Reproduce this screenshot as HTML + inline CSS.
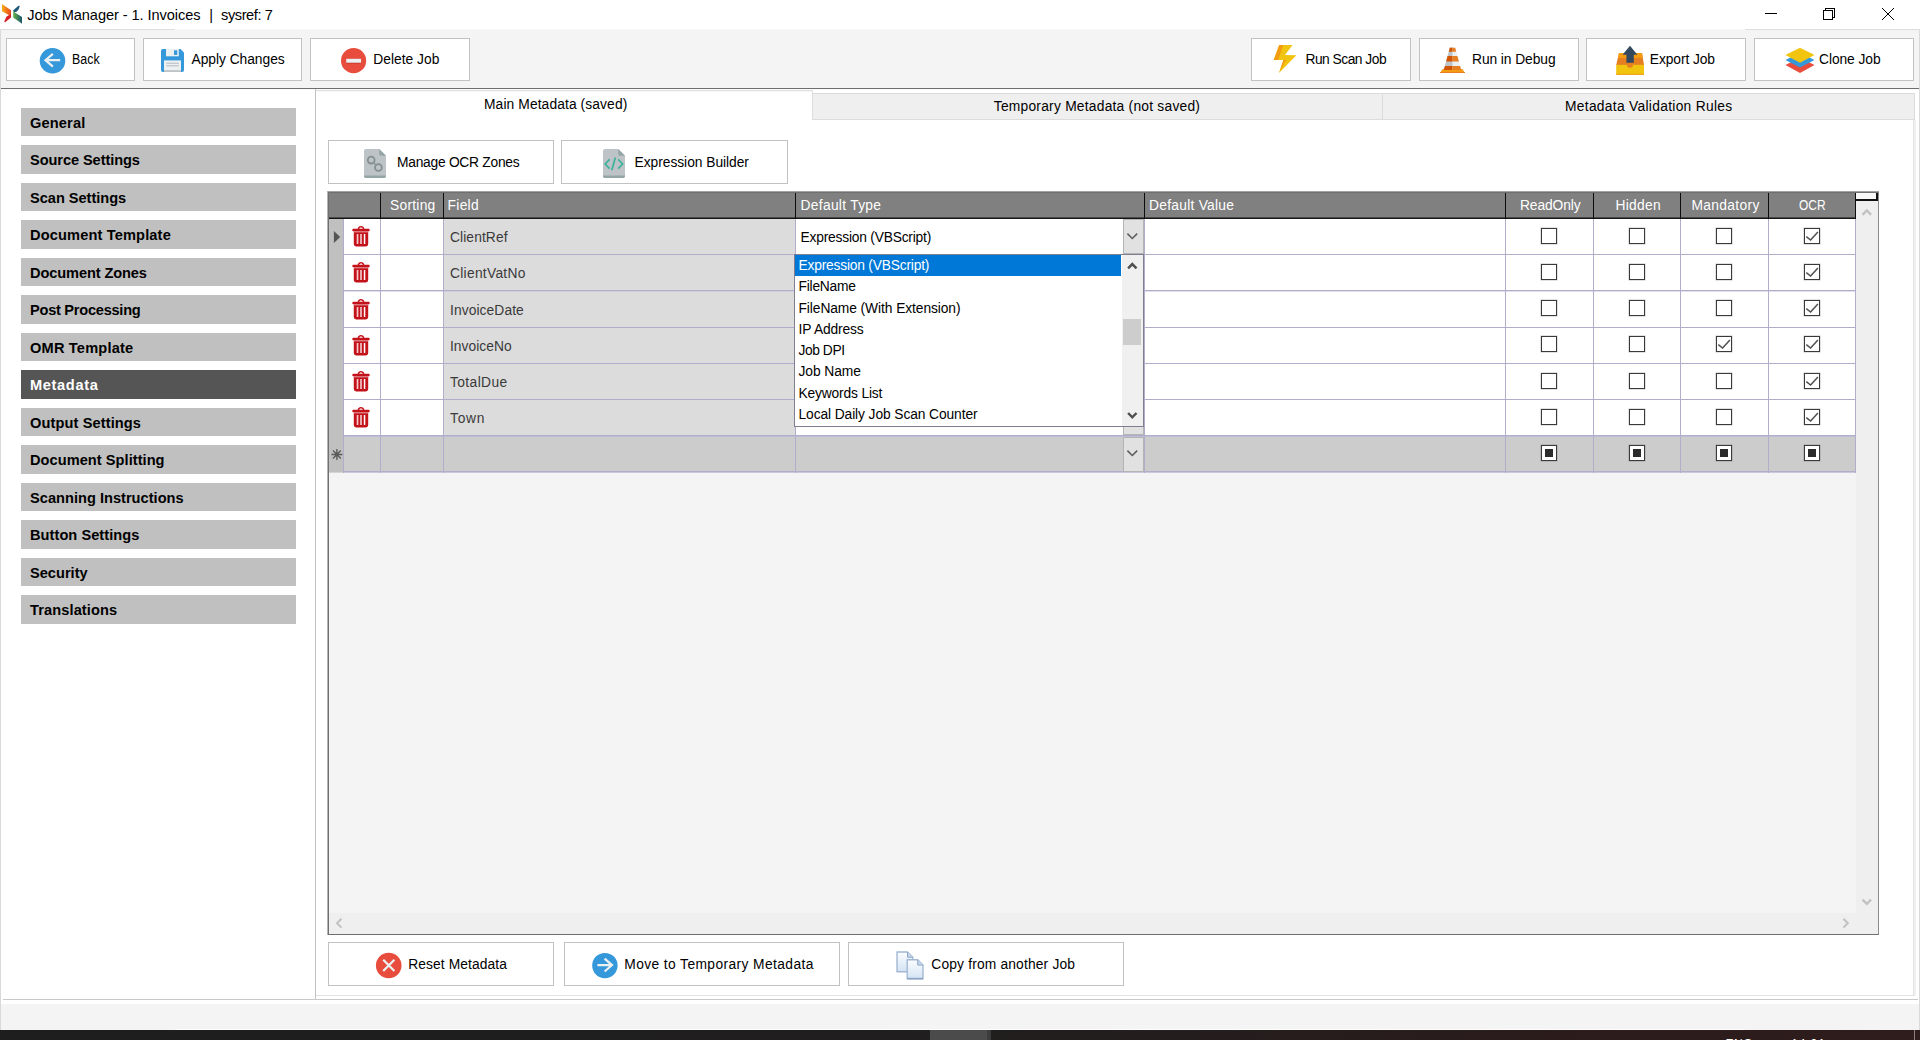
<!DOCTYPE html>
<html lang="en"><head><meta charset="utf-8"><title>Jobs Manager - 1. Invoices | sysref: 7</title>
<style>
html,body{margin:0;padding:0}
body{width:1920px;height:1040px;position:relative;overflow:hidden;background:#fff;font-family:"Liberation Sans",sans-serif;color:#000}
body div,body span.t,body svg{position:absolute}
span.t{white-space:pre;line-height:20px;height:20px}
.btn{box-sizing:border-box;border:1px solid #c2c2c2;background:#fff}
.sb{background:#c0c0c0}
.sb.sel{background:#555}
.hl{background:#b4b4cc}
.cb{box-sizing:border-box;border:1px solid #3a3a3a;box-shadow:0 0 0 0.5px rgba(80,80,80,.35);background:#fff;width:16px;height:16px}

</style></head><body>
<svg style="left:0;top:0" width="26" height="28" viewBox="0 0 26 28">
<defs>
<linearGradient id="gO" x1="0" y1="0" x2="1" y2="0"><stop offset="0" stop-color="#fbab18"/><stop offset="1" stop-color="#e6461c"/></linearGradient>
<linearGradient id="gG" x1="0" y1="0" x2="1" y2="0"><stop offset="0" stop-color="#63b246"/><stop offset="1" stop-color="#1d566d"/></linearGradient>
</defs>
<polygon points="2,4 11,10.3 11,16.2 2,11.3" fill="url(#gO)"/>
<polygon points="11,14 11,17.6 5.2,22.2 4.2,21.4 6.6,16.4" fill="#d81f26"/>
<polygon points="13.3,10.2 18.2,6.1 19.8,5.8 18.8,8.9 16.6,11.7 13.6,12.4" fill="#1f5878"/>
<polygon points="13.2,11.6 22,17 22,23.8 13.2,17.4" fill="url(#gG)"/>
</svg>
<span class="t " style="left:27.20px;top:4.94px;font-size:14.6px;letter-spacing:-0.076px;color:#000;">Jobs Manager - 1. Invoices</span>
<span class="t " style="left:209.30px;top:4.94px;font-size:14.6px;letter-spacing:0.000px;color:#000;">|</span>
<span class="t " style="left:221.00px;top:4.94px;font-size:14.6px;letter-spacing:-0.421px;color:#000;">sysref: 7</span>
<svg style="left:1750px;top:0" width="170" height="29" viewBox="1750 0 170 29" fill="none" stroke="#000" stroke-width="1">
<path d="M1765 13.5H1777"/>
<path d="M1823.5 10.5h9v9h-9zM1825.5 10.5v-2h9v9h-2" shape-rendering="crispEdges"/>
<path d="M1882 8l12 12M1894 8l-12 12" stroke-width="1"/>
</svg>
<div id="client" style="left:0;top:0;width:1920px;height:1030px;overflow:hidden"><div id="cl" style="left:0;top:0;width:1920px;height:1040px">
<div class="" style="left:0px;top:29px;width:1920px;height:1px;background:#f9f9f9"></div>
<div class="" style="left:0px;top:29px;width:175px;height:1px;background:#dedede"></div>
<div class="" style="left:1745px;top:29px;width:175px;height:1px;background:#dedede"></div>
<div class="" style="left:0px;top:30px;width:1920px;height:58px;background:#f4f4f4"></div>
<div class="" style="left:0px;top:88px;width:1920px;height:1px;background:#6e6e6e"></div>
<div class="" style="left:0px;top:89px;width:1920px;height:1px;background:#fbfbfb"></div>
<div class="btn" style="left:6px;top:38px;width:129px;height:43px;"></div>
<div class="btn" style="left:143px;top:38px;width:159px;height:43px;"></div>
<div class="btn" style="left:310px;top:38px;width:160px;height:43px;"></div>
<div class="btn" style="left:1251px;top:38px;width:160px;height:43px;"></div>
<div class="btn" style="left:1419px;top:38px;width:160px;height:43px;"></div>
<div class="btn" style="left:1586px;top:38px;width:160px;height:43px;"></div>
<div class="btn" style="left:1754px;top:38px;width:160px;height:43px;"></div>
<svg style="left:38px;top:46px" width="30" height="30" viewBox="38 46 30 30">
<circle cx="52.5" cy="60.7" r="12.8" fill="#3498db"/>
<path d="M60.2 60.2H46M52.9 53.8L45.5 60.2l7.4 6.4" fill="none" stroke="#ecf0f1" stroke-width="2.2" stroke-linecap="butt" stroke-linejoin="miter"/>
</svg>
<span class="t " style="left:72.00px;top:50.12px;font-size:13.8px;letter-spacing:0.000px;color:#000;transform:scaleX(0.8996);transform-origin:0 0;">Back</span>
<svg style="left:159px;top:47px" width="28" height="28" viewBox="159 47 28 28">
<path d="M163 49h17.5l3.5 3.5v17.5a2 2 0 0 1-2 2h-19a2 2 0 0 1-2-2v-19a2 2 0 0 1 2-2z" fill="#3498db"/>
<rect x="166" y="49" width="12.8" height="7.3" fill="#ecf0f1"/>
<rect x="174" y="50.3" width="3.3" height="4.6" fill="#3498db"/>
<rect x="164" y="60.4" width="17" height="11.6" fill="#ecf0f1"/>
<rect x="164" y="70.2" width="17" height="1.8" fill="#bdc3c7"/>
<rect x="166.3" y="62.7" width="12.5" height="1.2" fill="#bdc3c7"/>
<rect x="166.3" y="65.2" width="12.5" height="1.2" fill="#bdc3c7"/>
</svg>
<span class="t " style="left:191.50px;top:50.12px;font-size:13.8px;letter-spacing:-0.033px;color:#000;">Apply Changes</span>
<svg style="left:339px;top:46px" width="30" height="30" viewBox="339 46 30 30">
<circle cx="353.6" cy="60.7" r="12.6" fill="#e74c3c"/>
<rect x="346.2" y="59.9" width="14.8" height="3.6" fill="#c0392b"/>
<rect x="346.2" y="58.8" width="14.8" height="3.9" fill="#ecf0f1"/>
</svg>
<span class="t " style="left:373.30px;top:50.12px;font-size:13.8px;letter-spacing:0.014px;color:#000;">Delete Job</span>
<svg style="left:1270px;top:43px" width="30" height="32" viewBox="1270 43 30 32">
<polygon points="1279.2,45 1292.6,45 1285,54.9 1296.4,55.2 1279,73 1283.4,60 1273.7,60" fill="#f1c40f"/>
<polygon points="1279.2,45 1283.2,45 1278.2,60 1273.7,60" fill="#f39c12"/>
<polygon points="1283.4,60 1279,73 1284.5,62.5 1286.5,60" fill="#f39c12"/>
</svg>
<span class="t " style="left:1305.50px;top:50.12px;font-size:13.8px;letter-spacing:-0.508px;color:#000;">Run Scan Job</span>
<svg style="left:1438px;top:45px" width="30" height="30" viewBox="1438 45 30 30">
<polygon points="1442.6,69 1462.4,69 1465,73 1440,73" fill="#f39c12"/>
<rect x="1440" y="72" width="25" height="1" fill="#e67e22"/>
<polygon points="1449.9,47.5 1455.1,47.5 1461.2,69.9 1443.8,69.9" fill="#ecf0f1"/>
<polygon points="1449.9,47.5 1452.5,47.5 1452.5,69.9 1443.8,69.9" fill="#bdc3c7"/>
<clipPath id="cc"><polygon points="1449.9,47.5 1455.1,47.5 1461.2,69.9 1443.8,69.9"/></clipPath>
<g clip-path="url(#cc)">
<rect x="1440" y="47.5" width="12.5" height="4.2" fill="#d35400"/><rect x="1452.5" y="47.5" width="12.5" height="4.2" fill="#e67e22"/>
<rect x="1440" y="56" width="12.5" height="5.5" fill="#d35400"/><rect x="1452.5" y="56" width="12.5" height="5.5" fill="#e67e22"/>
<rect x="1440" y="66" width="12.5" height="4" fill="#d35400"/><rect x="1452.5" y="66" width="12.5" height="4" fill="#e67e22"/>
</g>
</svg>
<span class="t " style="left:1472.00px;top:50.12px;font-size:13.8px;letter-spacing:-0.072px;color:#000;">Run in Debug</span>
<svg style="left:1614px;top:43px" width="32" height="34" viewBox="1614 43 32 34">
<polygon points="1619,53 1642,53 1644,64.9 1616.2,64.9" fill="#e67e22"/>
<polygon points="1619,53 1642,53 1642.9,58 1618,58" fill="#f39c12"/>
<rect x="1616.2" y="64.8" width="27.8" height="10" fill="#f1c40f"/>
<rect x="1616.2" y="73.8" width="27.8" height="1" fill="#f39c12"/>
<path d="M1627 64.8a3 3 0 0 0 6 0z" fill="#e67e22"/>
<polygon points="1630,45.7 1637.4,54.7 1633.8,54.7 1633.8,62.7 1626.4,62.7 1626.4,54.7 1622.5,54.7" fill="#34495e"/>
</svg>
<span class="t " style="left:1649.80px;top:50.12px;font-size:13.8px;letter-spacing:-0.085px;color:#000;">Export Job</span>
<svg style="left:1783px;top:45px" width="34" height="30" viewBox="1783 45 34 30">
<polygon points="1800,57.7 1814.5,65 1800,72.9 1785.4,65" fill="#e74c3c"/>
<polygon points="1800,52.7 1814.5,60 1800,67.6 1785.4,60" fill="#3498db"/>
<polygon points="1800,47.7 1814.5,55 1800,62.7 1785.4,55" fill="#f1c40f"/>
</svg>
<span class="t " style="left:1819.00px;top:50.12px;font-size:13.8px;letter-spacing:-0.068px;color:#000;">Clone Job</span>
<div class="" style="left:0px;top:30px;width:1px;height:1000px;background:#d9d9d9"></div>
<div class="" style="left:1919px;top:30px;width:1px;height:1000px;background:#dadada"></div>
<div class="" style="left:1px;top:1004px;width:1918px;height:26px;background:#f4f4f4"></div>
<div class="" style="left:3px;top:999px;width:1915px;height:1px;background:#c9c9c9"></div>
<div class="" style="left:175px;top:1029px;width:1570px;height:1px;background:#fff"></div>
<div class="" style="left:315px;top:89px;width:1px;height:910px;background:#c2c2c2"></div>
<div class="sb" style="left:21px;top:108px;width:275px;height:28px;"></div>
<span class="t " style="left:30.00px;top:112.54px;font-size:14.6px;letter-spacing:0.155px;color:#000;font-weight:bold;">General</span>
<div class="sb" style="left:21px;top:145px;width:275px;height:29px;"></div>
<span class="t " style="left:30.00px;top:150.04px;font-size:14.6px;letter-spacing:-0.082px;color:#000;font-weight:bold;">Source Settings</span>
<div class="sb" style="left:21px;top:183px;width:275px;height:28px;"></div>
<span class="t " style="left:30.00px;top:187.54px;font-size:14.6px;letter-spacing:-0.029px;color:#000;font-weight:bold;">Scan Settings</span>
<div class="sb" style="left:21px;top:220px;width:275px;height:29px;"></div>
<span class="t " style="left:30.00px;top:225.04px;font-size:14.6px;letter-spacing:0.147px;color:#000;font-weight:bold;">Document Template</span>
<div class="sb" style="left:21px;top:258px;width:275px;height:28px;"></div>
<span class="t " style="left:30.00px;top:262.54px;font-size:14.6px;letter-spacing:-0.110px;color:#000;font-weight:bold;">Document Zones</span>
<div class="sb" style="left:21px;top:295px;width:275px;height:29px;"></div>
<span class="t " style="left:30.00px;top:300.04px;font-size:14.6px;letter-spacing:-0.261px;color:#000;font-weight:bold;">Post Processing</span>
<div class="sb" style="left:21px;top:333px;width:275px;height:28px;"></div>
<span class="t " style="left:30.00px;top:337.54px;font-size:14.6px;letter-spacing:0.188px;color:#000;font-weight:bold;">OMR Template</span>
<div class="sb sel" style="left:21px;top:370px;width:275px;height:29px;"></div>
<span class="t " style="left:30.00px;top:375.04px;font-size:14.6px;letter-spacing:0.645px;color:#fff;font-weight:bold;">Metadata</span>
<div class="sb" style="left:21px;top:408px;width:275px;height:28px;"></div>
<span class="t " style="left:30.00px;top:412.54px;font-size:14.6px;letter-spacing:0.108px;color:#000;font-weight:bold;">Output Settings</span>
<div class="sb" style="left:21px;top:445px;width:275px;height:29px;"></div>
<span class="t " style="left:30.00px;top:450.04px;font-size:14.6px;letter-spacing:0.045px;color:#000;font-weight:bold;">Document Splitting</span>
<div class="sb" style="left:21px;top:483px;width:275px;height:28px;"></div>
<span class="t " style="left:30.00px;top:487.54px;font-size:14.6px;letter-spacing:0.019px;color:#000;font-weight:bold;">Scanning Instructions</span>
<div class="sb" style="left:21px;top:520px;width:275px;height:29px;"></div>
<span class="t " style="left:30.00px;top:525.04px;font-size:14.6px;letter-spacing:0.052px;color:#000;font-weight:bold;">Button Settings</span>
<div class="sb" style="left:21px;top:558px;width:275px;height:28px;"></div>
<span class="t " style="left:30.00px;top:562.54px;font-size:14.6px;letter-spacing:0.012px;color:#000;font-weight:bold;">Security</span>
<div class="sb" style="left:21px;top:595px;width:275px;height:29px;"></div>
<span class="t " style="left:30.00px;top:600.04px;font-size:14.6px;letter-spacing:0.109px;color:#000;font-weight:bold;">Translations</span>
<div class="" style="left:316px;top:90px;width:497px;height:1px;background:#e2e2e2"></div>
<div class="" style="left:316px;top:91px;width:497px;height:1px;background:#f6f6f6"></div>
<div class="" style="left:812px;top:90px;width:1px;height:30px;background:#dedede"></div>
<div class="" style="left:813px;top:93px;width:1101px;height:27px;background:#efefef"></div>
<div class="" style="left:813px;top:93px;width:1102px;height:1px;background:#dcdcdc"></div>
<div class="" style="left:813px;top:119px;width:1102px;height:1px;background:#dcdcdc"></div>
<div class="" style="left:1382px;top:93px;width:1px;height:27px;background:#dcdcdc"></div>
<div class="" style="left:1914px;top:93px;width:1px;height:27px;background:#dcdcdc"></div>
<span class="t " style="left:484.00px;top:95.12px;font-size:13.8px;letter-spacing:0.108px;color:#000;">Main Metadata (saved)</span>
<span class="t " style="left:993.80px;top:97.12px;font-size:13.8px;letter-spacing:0.233px;color:#000;">Temporary Metadata (not saved)</span>
<span class="t " style="left:1565.00px;top:97.12px;font-size:13.8px;letter-spacing:0.297px;color:#000;">Metadata Validation Rules</span>
<div class="" style="left:1913px;top:120px;width:1px;height:876px;background:#e3e3e3"></div>
<div class="" style="left:316px;top:995px;width:1598px;height:1px;background:#e3e3e3"></div>
<div class="" style="left:1914px;top:120px;width:2px;height:876px;background:#f1f1f1"></div>
<div class="btn" style="left:328px;top:140px;width:226px;height:44px;"></div>
<div class="btn" style="left:561px;top:140px;width:227px;height:44px;"></div>
<svg style="left:362px;top:147px" width="28" height="34" viewBox="362 147 28 34">
<path d="M366 149h13.2l6.8 6.8v20.2a2 2 0 0 1-2 2h-18a2 2 0 0 1-2-2v-25a2 2 0 0 1 2-2z" fill="#bdc3c7"/>
<path d="M364 175.6h22v0.4a2 2 0 0 1-2 2h-18a2 2 0 0 1-2-2z" fill="#95a5a6"/>
<path d="M379.2 149l6.8 6.8h-4.8a2 2 0 0 1-2-2z" fill="#95a5a6"/>
<circle cx="371.2" cy="160.1" r="3.4" fill="none" stroke="#84908f" stroke-width="1.8"/>
<circle cx="378.4" cy="167.5" r="3.4" fill="none" stroke="#84908f" stroke-width="1.8"/>
<path d="M373.4 162.6l2.8 2.6" stroke="#8b999a" stroke-width="1.6"/>
</svg>
<span class="t " style="left:397.00px;top:153.12px;font-size:13.8px;letter-spacing:-0.257px;color:#000;">Manage OCR Zones</span>
<svg style="left:601px;top:147px" width="28" height="34" viewBox="601 147 28 34">
<path d="M605 149h13.2l6.8 6.8v20.2a2 2 0 0 1-2 2h-18a2 2 0 0 1-2-2v-25a2 2 0 0 1 2-2z" fill="#bdc3c7"/>
<path d="M603 175.6h22v0.4a2 2 0 0 1-2 2h-18a2 2 0 0 1-2-2z" fill="#95a5a6"/>
<path d="M618.2 149l6.8 6.8h-4.8a2 2 0 0 1-2-2z" fill="#95a5a6"/>
<path d="M609.6 159.4l-4.4 4.6 4.4 4.6M618.2 159.4l4.4 4.6-4.4 4.6M615.4 157.4l-3.6 12.8" fill="none" stroke="#3db39a" stroke-width="1.7"/>
</svg>
<span class="t " style="left:634.50px;top:153.12px;font-size:13.8px;letter-spacing:-0.033px;color:#000;">Expression Builder</span>
<div class="btn" style="left:328px;top:942px;width:226px;height:44px;"></div>
<div class="btn" style="left:564px;top:942px;width:276px;height:44px;"></div>
<div class="btn" style="left:848px;top:942px;width:276px;height:44px;"></div>
<svg style="left:374px;top:950px" width="30" height="30" viewBox="374 950 30 30">
<circle cx="388.7" cy="965.5" r="12.8" fill="#e74c3c"/>
<path d="M383.2 959.8l11.2 11.2M394.4 959.8l-11.2 11.2" stroke="#ecf0f1" stroke-width="2.3"/>
</svg>
<span class="t " style="left:408.20px;top:955.12px;font-size:13.8px;letter-spacing:0.106px;color:#000;">Reset Metadata</span>
<svg style="left:590px;top:950px" width="30" height="30" viewBox="590 950 30 30">
<circle cx="604.9" cy="965.6" r="12.7" fill="#3498db"/>
<path d="M597.4 965.1H611M604.6 958.7l7.4 6.4-7.4 6.4" fill="none" stroke="#ecf0f1" stroke-width="2.2"/>
</svg>
<span class="t " style="left:624.30px;top:955.12px;font-size:13.8px;letter-spacing:0.395px;color:#000;">Move to Temporary Metadata</span>
<svg style="left:894px;top:949px" width="32" height="33" viewBox="894 949 32 33">
<defs><linearGradient id="gP" x1="0" y1="0" x2="0" y2="1"><stop offset="0" stop-color="#fbfdff"/><stop offset="1" stop-color="#d3e3f4"/></linearGradient></defs>
<path d="M897 952h10.5l5.3 5.3v14.5h-15.8z" fill="url(#gP)" stroke="#a3b8d3" stroke-width="1.4" stroke-linejoin="round"/>
<path d="M907.5 952v5.3h5.3" fill="#c5d6ea" stroke="#8fa9cb" stroke-width="1"/>
<path d="M907.2 959.8h10.5l5.3 5.3v13.8h-15.8z" fill="url(#gP)" stroke="#a3b8d3" stroke-width="1.4" stroke-linejoin="round"/>
<path d="M907.2 978.6h15.8" stroke="#8fa5c4" stroke-width="1.6"/>
<path d="M917.7 959.8v5.3h5.3" fill="#c5d6ea" stroke="#8fa9cb" stroke-width="1"/>
</svg>
<span class="t " style="left:931.30px;top:955.12px;font-size:13.8px;letter-spacing:0.166px;color:#000;">Copy from another Job</span>
<div class="" style="left:327px;top:191px;width:1552px;height:1px;background:#a2a2a2"></div>
<div class="" style="left:327px;top:191px;width:1px;height:744px;background:#b4b4b4"></div>
<div class="" style="left:328px;top:192px;width:1551px;height:743px;box-sizing:border-box;border:1px solid #6f6f6f;border-right-color:#8c8c8c;background:#f4f4f4"></div>
<div class="" style="left:329px;top:193px;width:1527px;height:25px;background:#808080"></div>
<div class="" style="left:329px;top:217px;width:1527px;height:1px;background:#4a4a4a"></div>
<div class="" style="left:329px;top:218px;width:1527px;height:1px;background:#141414"></div>
<div class="" style="left:380px;top:193px;width:1px;height:25px;background:#0c0c0c"></div>
<div class="" style="left:443px;top:193px;width:1px;height:25px;background:#0c0c0c"></div>
<div class="" style="left:795px;top:193px;width:1px;height:25px;background:#0c0c0c"></div>
<div class="" style="left:1144px;top:193px;width:1px;height:25px;background:#0c0c0c"></div>
<div class="" style="left:1505px;top:193px;width:1px;height:25px;background:#0c0c0c"></div>
<div class="" style="left:1593px;top:193px;width:1px;height:25px;background:#0c0c0c"></div>
<div class="" style="left:1680px;top:193px;width:1px;height:25px;background:#0c0c0c"></div>
<div class="" style="left:1768px;top:193px;width:1px;height:25px;background:#0c0c0c"></div>
<div class="" style="left:1855px;top:193px;width:1px;height:25px;background:#0c0c0c"></div>
<span class="t " style="left:390.00px;top:196.12px;font-size:13.8px;letter-spacing:0.254px;color:#fff;">Sorting</span>
<span class="t " style="left:447.60px;top:196.12px;font-size:13.8px;letter-spacing:0.272px;color:#fff;">Field</span>
<span class="t " style="left:800.60px;top:196.12px;font-size:13.8px;letter-spacing:0.288px;color:#fff;">Default Type</span>
<span class="t " style="left:1149.00px;top:196.12px;font-size:13.8px;letter-spacing:0.264px;color:#fff;">Default Value</span>
<span class="t " style="left:1520.00px;top:196.12px;font-size:13.8px;letter-spacing:-0.110px;color:#fff;">ReadOnly</span>
<span class="t " style="left:1615.40px;top:196.12px;font-size:13.8px;letter-spacing:0.293px;color:#fff;">Hidden</span>
<span class="t " style="left:1691.50px;top:196.12px;font-size:13.8px;letter-spacing:0.337px;color:#fff;">Mandatory</span>
<span class="t " style="left:1799.40px;top:196.12px;font-size:13.8px;letter-spacing:0.000px;color:#fff;transform:scaleX(0.8674);transform-origin:0 0;">OCR</span>
<div class="" style="left:329px;top:219px;width:14px;height:253px;background:#c0c0c0"></div>
<div class="" style="left:344px;top:219px;width:1512px;height:217px;background:#fff"></div>
<div class="" style="left:444px;top:219px;width:351px;height:217px;background:#dcdcdc"></div>
<div class="" style="left:344px;top:437px;width:1512px;height:35px;background:#cccccc"></div>
<div class="" style="left:343px;top:254px;width:1513px;height:1px;background:#b0aeca"></div>
<div class="" style="left:343px;top:290px;width:1513px;height:1px;background:#b0aeca"></div>
<div class="" style="left:343px;top:327px;width:1513px;height:1px;background:#b0aeca"></div>
<div class="" style="left:343px;top:363px;width:1513px;height:1px;background:#b0aeca"></div>
<div class="" style="left:343px;top:399px;width:1513px;height:1px;background:#b0aeca"></div>
<div class="" style="left:343px;top:435px;width:1513px;height:1px;background:#b0aeca"></div>
<div class="" style="left:343px;top:471px;width:1513px;height:1px;background:#b0aeca"></div>
<div class="" style="left:344px;top:291px;width:1512px;height:1px;background:#e0e0ec"></div>
<div class="" style="left:343px;top:436px;width:1513px;height:1px;background:#bdbdd4"></div>
<div class="" style="left:343px;top:472px;width:1513px;height:1px;background:#c9c9dc"></div>
<div class="" style="left:329px;top:472px;width:14px;height:1px;background:#d4d4d4"></div>
<div class="" style="left:444px;top:291px;width:351px;height:1px;background:#cfcfdc"></div>
<div class="" style="left:343px;top:219px;width:1px;height:254px;background:#b0aeca"></div>
<div class="" style="left:380px;top:219px;width:1px;height:254px;background:#b0aeca"></div>
<div class="" style="left:443px;top:219px;width:1px;height:254px;background:#b0aeca"></div>
<div class="" style="left:795px;top:219px;width:1px;height:254px;background:#b0aeca"></div>
<div class="" style="left:1144px;top:219px;width:1px;height:254px;background:#b0aeca"></div>
<div class="" style="left:1505px;top:219px;width:1px;height:254px;background:#b0aeca"></div>
<div class="" style="left:1593px;top:219px;width:1px;height:254px;background:#b0aeca"></div>
<div class="" style="left:1680px;top:219px;width:1px;height:254px;background:#b0aeca"></div>
<div class="" style="left:1768px;top:219px;width:1px;height:254px;background:#b0aeca"></div>
<div class="" style="left:1855px;top:219px;width:1px;height:254px;background:#b0aeca"></div>
<svg style="left:352.3px;top:226.20px" width="18" height="21" viewBox="0 0 18 21"><g fill="#c4121a"><path d="M5.6 3.1C5.9 0.9 7.2 0 9 0s3.1 0.9 3.4 3.1h-1.5C10.7 1.9 10 1.4 9 1.4S7.3 1.9 7.1 3.1z"/>
<rect x="0.3" y="2.8" width="17.4" height="2.5" rx="1.1"/>
<rect x="1.6" y="5.3" width="14.8" height="1" opacity="0.6"/>
<path d="M1.8 6.3h14.4v11.8a2.4 2.4 0 0 1-2.4 2.4H4.2a2.4 2.4 0 0 1-2.4-2.4z"/></g>
<g fill="#f3c9cb"><rect x="4.7" y="8" width="1.7" height="10"/><rect x="8" y="8" width="2" height="10" fill="#e9a9ac"/><rect x="11.8" y="8" width="1.5" height="10" fill="#fff"/></g></svg>
<span class="t " style="left:450.00px;top:228.02px;font-size:13.8px;letter-spacing:0.093px;color:#3a3a3a;">ClientRef</span>
<svg style="left:352.3px;top:262.45px" width="18" height="21" viewBox="0 0 18 21"><g fill="#c4121a"><path d="M5.6 3.1C5.9 0.9 7.2 0 9 0s3.1 0.9 3.4 3.1h-1.5C10.7 1.9 10 1.4 9 1.4S7.3 1.9 7.1 3.1z"/>
<rect x="0.3" y="2.8" width="17.4" height="2.5" rx="1.1"/>
<rect x="1.6" y="5.3" width="14.8" height="1" opacity="0.6"/>
<path d="M1.8 6.3h14.4v11.8a2.4 2.4 0 0 1-2.4 2.4H4.2a2.4 2.4 0 0 1-2.4-2.4z"/></g>
<g fill="#f3c9cb"><rect x="4.7" y="8" width="1.7" height="10"/><rect x="8" y="8" width="2" height="10" fill="#e9a9ac"/><rect x="11.8" y="8" width="1.5" height="10" fill="#fff"/></g></svg>
<span class="t " style="left:450.00px;top:264.27px;font-size:13.8px;letter-spacing:0.279px;color:#3a3a3a;">ClientVatNo</span>
<svg style="left:352.3px;top:298.70px" width="18" height="21" viewBox="0 0 18 21"><g fill="#c4121a"><path d="M5.6 3.1C5.9 0.9 7.2 0 9 0s3.1 0.9 3.4 3.1h-1.5C10.7 1.9 10 1.4 9 1.4S7.3 1.9 7.1 3.1z"/>
<rect x="0.3" y="2.8" width="17.4" height="2.5" rx="1.1"/>
<rect x="1.6" y="5.3" width="14.8" height="1" opacity="0.6"/>
<path d="M1.8 6.3h14.4v11.8a2.4 2.4 0 0 1-2.4 2.4H4.2a2.4 2.4 0 0 1-2.4-2.4z"/></g>
<g fill="#f3c9cb"><rect x="4.7" y="8" width="1.7" height="10"/><rect x="8" y="8" width="2" height="10" fill="#e9a9ac"/><rect x="11.8" y="8" width="1.5" height="10" fill="#fff"/></g></svg>
<span class="t " style="left:450.00px;top:300.52px;font-size:13.8px;letter-spacing:0.092px;color:#3a3a3a;">InvoiceDate</span>
<svg style="left:352.3px;top:334.95px" width="18" height="21" viewBox="0 0 18 21"><g fill="#c4121a"><path d="M5.6 3.1C5.9 0.9 7.2 0 9 0s3.1 0.9 3.4 3.1h-1.5C10.7 1.9 10 1.4 9 1.4S7.3 1.9 7.1 3.1z"/>
<rect x="0.3" y="2.8" width="17.4" height="2.5" rx="1.1"/>
<rect x="1.6" y="5.3" width="14.8" height="1" opacity="0.6"/>
<path d="M1.8 6.3h14.4v11.8a2.4 2.4 0 0 1-2.4 2.4H4.2a2.4 2.4 0 0 1-2.4-2.4z"/></g>
<g fill="#f3c9cb"><rect x="4.7" y="8" width="1.7" height="10"/><rect x="8" y="8" width="2" height="10" fill="#e9a9ac"/><rect x="11.8" y="8" width="1.5" height="10" fill="#fff"/></g></svg>
<span class="t " style="left:450.00px;top:336.77px;font-size:13.8px;letter-spacing:0.029px;color:#3a3a3a;">InvoiceNo</span>
<svg style="left:352.3px;top:371.20px" width="18" height="21" viewBox="0 0 18 21"><g fill="#c4121a"><path d="M5.6 3.1C5.9 0.9 7.2 0 9 0s3.1 0.9 3.4 3.1h-1.5C10.7 1.9 10 1.4 9 1.4S7.3 1.9 7.1 3.1z"/>
<rect x="0.3" y="2.8" width="17.4" height="2.5" rx="1.1"/>
<rect x="1.6" y="5.3" width="14.8" height="1" opacity="0.6"/>
<path d="M1.8 6.3h14.4v11.8a2.4 2.4 0 0 1-2.4 2.4H4.2a2.4 2.4 0 0 1-2.4-2.4z"/></g>
<g fill="#f3c9cb"><rect x="4.7" y="8" width="1.7" height="10"/><rect x="8" y="8" width="2" height="10" fill="#e9a9ac"/><rect x="11.8" y="8" width="1.5" height="10" fill="#fff"/></g></svg>
<span class="t " style="left:450.00px;top:373.02px;font-size:13.8px;letter-spacing:0.390px;color:#3a3a3a;">TotalDue</span>
<svg style="left:352.3px;top:407.45px" width="18" height="21" viewBox="0 0 18 21"><g fill="#c4121a"><path d="M5.6 3.1C5.9 0.9 7.2 0 9 0s3.1 0.9 3.4 3.1h-1.5C10.7 1.9 10 1.4 9 1.4S7.3 1.9 7.1 3.1z"/>
<rect x="0.3" y="2.8" width="17.4" height="2.5" rx="1.1"/>
<rect x="1.6" y="5.3" width="14.8" height="1" opacity="0.6"/>
<path d="M1.8 6.3h14.4v11.8a2.4 2.4 0 0 1-2.4 2.4H4.2a2.4 2.4 0 0 1-2.4-2.4z"/></g>
<g fill="#f3c9cb"><rect x="4.7" y="8" width="1.7" height="10"/><rect x="8" y="8" width="2" height="10" fill="#e9a9ac"/><rect x="11.8" y="8" width="1.5" height="10" fill="#fff"/></g></svg>
<span class="t " style="left:450.00px;top:409.27px;font-size:13.8px;letter-spacing:0.728px;color:#3a3a3a;">Town</span>
<svg style="left:333px;top:230px" width="9" height="14" viewBox="333 230 9 14"><polygon points="333.9,231.1 340.2,237 333.9,242.9" fill="#555"/></svg>
<svg style="left:330px;top:447px" width="13" height="14" viewBox="330 447 13 14"><path d="M336.9 449v11M331.4 454.5h11M333 450.6l7.8 7.8M340.8 450.6l-7.8 7.8" stroke="#5a5a5a" stroke-width="1.4" fill="none"/></svg>
<div class="cb" style="left:1541px;top:228px;width:16px;height:16px;"></div>
<div class="cb" style="left:1629px;top:228px;width:16px;height:16px;"></div>
<div class="cb" style="left:1716px;top:228px;width:16px;height:16px;"></div>
<div class="cb" style="left:1804px;top:228px;width:16px;height:16px;"><svg style="left:0;top:0" width="14" height="14" viewBox="0 0 14 14"><path d="M1.3 7.7L5.6 11L12.9 3.1" fill="none" stroke="#505050" stroke-width="1.5"/></svg></div>
<div class="cb" style="left:1541px;top:264px;width:16px;height:16px;"></div>
<div class="cb" style="left:1629px;top:264px;width:16px;height:16px;"></div>
<div class="cb" style="left:1716px;top:264px;width:16px;height:16px;"></div>
<div class="cb" style="left:1804px;top:264px;width:16px;height:16px;"><svg style="left:0;top:0" width="14" height="14" viewBox="0 0 14 14"><path d="M1.3 7.7L5.6 11L12.9 3.1" fill="none" stroke="#505050" stroke-width="1.5"/></svg></div>
<div class="cb" style="left:1541px;top:300px;width:16px;height:16px;"></div>
<div class="cb" style="left:1629px;top:300px;width:16px;height:16px;"></div>
<div class="cb" style="left:1716px;top:300px;width:16px;height:16px;"></div>
<div class="cb" style="left:1804px;top:300px;width:16px;height:16px;"><svg style="left:0;top:0" width="14" height="14" viewBox="0 0 14 14"><path d="M1.3 7.7L5.6 11L12.9 3.1" fill="none" stroke="#505050" stroke-width="1.5"/></svg></div>
<div class="cb" style="left:1541px;top:336px;width:16px;height:16px;"></div>
<div class="cb" style="left:1629px;top:336px;width:16px;height:16px;"></div>
<div class="cb" style="left:1716px;top:336px;width:16px;height:16px;"><svg style="left:0;top:0" width="14" height="14" viewBox="0 0 14 14"><path d="M1.3 7.7L5.6 11L12.9 3.1" fill="none" stroke="#505050" stroke-width="1.5"/></svg></div>
<div class="cb" style="left:1804px;top:336px;width:16px;height:16px;"><svg style="left:0;top:0" width="14" height="14" viewBox="0 0 14 14"><path d="M1.3 7.7L5.6 11L12.9 3.1" fill="none" stroke="#505050" stroke-width="1.5"/></svg></div>
<div class="cb" style="left:1541px;top:373px;width:16px;height:16px;"></div>
<div class="cb" style="left:1629px;top:373px;width:16px;height:16px;"></div>
<div class="cb" style="left:1716px;top:373px;width:16px;height:16px;"></div>
<div class="cb" style="left:1804px;top:373px;width:16px;height:16px;"><svg style="left:0;top:0" width="14" height="14" viewBox="0 0 14 14"><path d="M1.3 7.7L5.6 11L12.9 3.1" fill="none" stroke="#505050" stroke-width="1.5"/></svg></div>
<div class="cb" style="left:1541px;top:409px;width:16px;height:16px;"></div>
<div class="cb" style="left:1629px;top:409px;width:16px;height:16px;"></div>
<div class="cb" style="left:1716px;top:409px;width:16px;height:16px;"></div>
<div class="cb" style="left:1804px;top:409px;width:16px;height:16px;"><svg style="left:0;top:0" width="14" height="14" viewBox="0 0 14 14"><path d="M1.3 7.7L5.6 11L12.9 3.1" fill="none" stroke="#505050" stroke-width="1.5"/></svg></div>
<div class="cb" style="left:1541px;top:445px;width:16px;height:16px;"><div style="left:3px;top:3px;width:8px;height:8px;background:#2b2b2b"></div></div>
<div class="cb" style="left:1629px;top:445px;width:16px;height:16px;"><div style="left:3px;top:3px;width:8px;height:8px;background:#2b2b2b"></div></div>
<div class="cb" style="left:1716px;top:445px;width:16px;height:16px;"><div style="left:3px;top:3px;width:8px;height:8px;background:#2b2b2b"></div></div>
<div class="cb" style="left:1804px;top:445px;width:16px;height:16px;"><div style="left:3px;top:3px;width:8px;height:8px;background:#2b2b2b"></div></div>
<span class="t " style="left:800.60px;top:227.72px;font-size:13.8px;letter-spacing:-0.214px;color:#000;">Expression (VBScript)</span>
<div class="" style="left:1123px;top:219px;width:21px;height:35px;box-sizing:border-box;border:1px solid #b4b4b4;background:#e1e1e1"></div>
<svg style="left:1123px;top:219px" width="21" height="35" viewBox="1123 219 21 35"><path d="M1127.4 233.6l4.9 4.9 4.9-4.9" fill="none" stroke="#5c5c5c" stroke-width="1.5"/></svg>
<div class="" style="left:1123px;top:427px;width:21px;height:8px;box-sizing:border-box;border:1px solid #b4b4b4;border-top:0;background:#e1e1e1"></div>
<div class="" style="left:1123px;top:437px;width:21px;height:35px;box-sizing:border-box;border:1px solid #b4b4b4;background:#e1e1e1"></div>
<svg style="left:1123px;top:437px" width="21" height="35" viewBox="1123 437 21 35"><path d="M1127.4 450.6l4.9 4.9 4.9-4.9" fill="none" stroke="#5c5c5c" stroke-width="1.5"/></svg>
<div class="" style="left:794px;top:254px;width:350px;height:173px;box-sizing:border-box;border:1px solid #7f7f8f;background:#fff"></div>
<div class="" style="left:795px;top:255px;width:326px;height:21px;background:#0078d7"></div>
<div class="" style="left:1122px;top:255px;width:21px;height:171px;background:#f0f0f0"></div>
<div class="" style="left:1123px;top:319px;width:18px;height:26px;background:#cdcdcd"></div>
<svg style="left:1122px;top:255px" width="21" height="171" viewBox="1122 255 21 171"><path d="M1128.1 268.4l4.2-4.3 4.2 4.3M1128.1 413l4.2 4.3 4.2-4.3" fill="none" stroke="#505050" stroke-width="2.5"/></svg>
<span class="t " style="left:798.50px;top:256.12px;font-size:13.8px;letter-spacing:-0.204px;color:#fff;">Expression (VBScript)</span>
<span class="t " style="left:798.50px;top:277.37px;font-size:13.8px;letter-spacing:-0.221px;color:#000;">FileName</span>
<span class="t " style="left:798.50px;top:298.62px;font-size:13.8px;letter-spacing:-0.084px;color:#000;">FileName (With Extension)</span>
<span class="t " style="left:798.50px;top:319.87px;font-size:13.8px;letter-spacing:-0.154px;color:#000;">IP Address</span>
<span class="t " style="left:798.50px;top:341.12px;font-size:13.8px;letter-spacing:-0.432px;color:#000;">Job DPI</span>
<span class="t " style="left:798.50px;top:362.37px;font-size:13.8px;letter-spacing:-0.057px;color:#000;">Job Name</span>
<span class="t " style="left:798.50px;top:383.62px;font-size:13.8px;letter-spacing:-0.167px;color:#000;">Keywords List</span>
<span class="t " style="left:798.50px;top:404.87px;font-size:13.8px;letter-spacing:-0.100px;color:#000;">Local Daily Job Scan Counter</span>
<div class="" style="left:1856px;top:193px;width:22px;height:721px;background:#efefef"></div>
<div class="" style="left:329px;top:913px;width:1549px;height:21px;background:#efefef"></div>
<div class="" style="left:1856px;top:193px;width:22px;height:8px;box-sizing:border-box;background:#f8f8f8;border-bottom:2px solid #111;border-right:2px solid #111"></div>
<svg style="left:1856px;top:200px" width="22" height="734" viewBox="1856 200 22 734"><path d="M1862.5 214.8l4.3-4.3 4.3 4.3M1862.5 899.6l4.3 4.3 4.3-4.3" fill="none" stroke="#c2c2c2" stroke-width="2.4"/></svg>
<svg style="left:329px;top:913px" width="1527" height="21" viewBox="329 913 1527 21"><path d="M341.4 918.8l-4.4 4.4 4.4 4.4M1843.4 918.8l4.4 4.4-4.4 4.4" fill="none" stroke="#c2c2c2" stroke-width="2"/></svg>
</div></div>
<div class="" style="left:0px;top:1030px;width:1920px;height:10px;background:linear-gradient(90deg,#1e1e1e 0%,#201e1e 50%,#2b1c1c 80%,#2f1c1c 100%)"></div>
<div class="" style="left:930px;top:1030px;width:57px;height:10px;background:#4b4b4b"></div>
<div class="" style="left:987px;top:1030px;width:4px;height:10px;background:#3c3c3c"></div>
<div class="" style="left:1914px;top:1030px;width:1px;height:10px;background:#8a7e7e"></div>
<span class="t" style="left:1725.6px;top:1036.5px;font-size:12px;color:#fff;height:4px;overflow:hidden;line-height:14px;letter-spacing:0.5px">ENG</span>
<span class="t" style="left:1791.2px;top:1036.5px;font-size:12px;color:#fff;height:4px;overflow:hidden;line-height:14px;letter-spacing:0.9px">14:01</span>
</body></html>
